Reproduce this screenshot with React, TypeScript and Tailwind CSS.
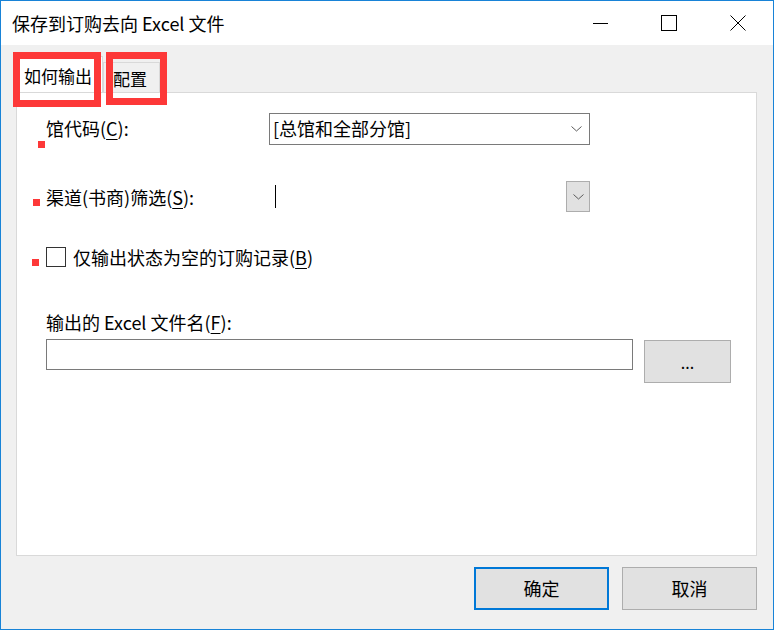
import React from "react";

const font = { fontFamily: '"Noto Sans CJK SC", "Noto Sans", sans-serif' };

function Chevron() {
  return (
    <svg width="11" height="6" viewBox="0 0 11 6" className="block">
      <path d="M0.5 0.5 L5.5 5 L10.5 0.5" fill="none" stroke="#5a5a5a" strokeWidth="1" />
    </svg>
  );
}

function Key({ k }: { k: string }) {
  return (
    <>
      (<span className="underline underline-offset-[3px] decoration-1">{k}</span>)
    </>
  );
}

export default function App() {
  return (
    <div
      className="relative w-[774px] h-[630px] border border-[#1883d7] flex flex-col text-black overflow-hidden"
      style={font}
    >
      {/* title bar */}
      <div className="h-[44px] flex-none bg-white flex items-center">
        <div className="pl-[11px] text-[18px] leading-[24px] flex-1 pb-[1px]">保存到订购去向 Excel 文件</div>
        <div className="flex h-full">
          <div className="w-[69px] h-full flex items-center justify-center pr-[1px]">
            <div className="w-[15px] h-[1px] bg-black" />
          </div>
          <div className="w-[69px] h-full flex items-center justify-center pr-[2px]">
            <div className="w-[16px] h-[16px] border border-black" />
          </div>
          <div className="w-[69px] h-full flex items-center justify-center pr-[1px]">
            <svg width="16" height="16" viewBox="0 0 16 16">
              <path d="M0.5 0.5 L15.5 15.5 M15.5 0.5 L0.5 15.5" stroke="#000" strokeWidth="1" />
            </svg>
          </div>
        </div>
      </div>

      {/* dialog body */}
      <div className="flex-1 bg-[#f0f0f0] flex flex-col pl-[15px] pr-[16px]">
        {/* tab strip */}
        <div className="h-[47px] flex-none flex items-end">
          <div className="w-[87px] h-[36px] bg-white border border-b-0 border-[#d9d9d9] pl-[7px] pt-[7px] text-[17px] leading-[24px] whitespace-nowrap">
            如何输出
          </div>
          <div className="w-[57px] h-[30px] border border-b-0 border-[#d9d9d9] pl-[9px] pt-[4px] text-[17px] leading-[24px] whitespace-nowrap">
            配置
          </div>
        </div>

        {/* tab page */}
        <div className="h-[464px] flex-none bg-white border border-[#d9d9d9] flex flex-col pl-[29px] text-[18px] leading-[24px]">
          <div className="mt-[20px] h-[32px] flex items-center">
            <div className="w-[223px] pb-[2px]">
              馆代码<Key k="C" />:
            </div>
            <div className="w-[321px] h-[32px] border border-[#7a7a7a] flex items-center justify-between pl-[3px] pr-[7px]">
              <span className="pb-[2px]">[总馆和全部分馆]</span>
              <Chevron />
            </div>
          </div>

          <div className="mt-[36px] h-[31px] flex items-center">
            <div className="w-[223px]">
              渠道(书商)筛选<Key k="S" />:
            </div>
            <div className="w-[321px] h-[31px] flex items-center justify-between">
              <div className="ml-[6px] w-[1px] h-[23px] bg-black" />
              <div className="w-[24px] h-[31px] bg-[#e1e1e1] border border-[#adadad] flex items-center justify-center">
                <Chevron />
              </div>
            </div>
          </div>

          <div className="mt-[35px] h-[20px] flex items-center">
            <div className="w-[20px] h-[20px] border border-[#333333] bg-white" />
            <div className="ml-[7px] pb-[1px]">
              仅输出状态为空的订购记录<Key k="B" />
            </div>
          </div>

          <div className="mt-[43px] h-[24px] flex items-center">
            <div>
              输出的 Excel 文件名<Key k="F" />:
            </div>
          </div>

          <div className="mt-[5px] flex items-start">
            <div className="w-[587px] h-[31px] border border-[#7a7a7a] bg-white" />
            <div className="ml-[11px] mt-[1px] w-[87px] h-[43px] bg-[#e1e1e1] border border-[#adadad] flex items-center justify-center text-[16px] leading-[20px]">
              ...
            </div>
          </div>
        </div>

        {/* dialog buttons */}
        <div className="mt-[11px] flex justify-end gap-[13px]">
          <div className="w-[135px] h-[43px] bg-[#e1e1e1] border-2 border-[#0078d7] flex items-center justify-center text-[18px] leading-[24px] pb-[1px]">
            确定
          </div>
          <div className="w-[135px] h-[43px] bg-[#e1e1e1] border border-[#adadad] flex items-center justify-center text-[18px] leading-[24px] pb-[1px]">
            取消
          </div>
        </div>
      </div>

      {/* red annotation marks */}
      <div className="absolute left-[12px] top-[51px] w-[88px] h-[55px] border-[7px] border-[#fd3838]" />
      <div className="absolute left-[105px] top-[51px] w-[61px] h-[53px] border-[7px] border-[#fd3838]" />
      <div className="absolute left-[37px] top-[140px] w-[7px] h-[7px] bg-[#fd3838]" />
      <div className="absolute left-[32px] top-[198px] w-[7px] h-[7px] bg-[#fd3838]" />
      <div className="absolute left-[31px] top-[258px] w-[7px] h-[7px] bg-[#fd3838]" />
    </div>
  );
}
